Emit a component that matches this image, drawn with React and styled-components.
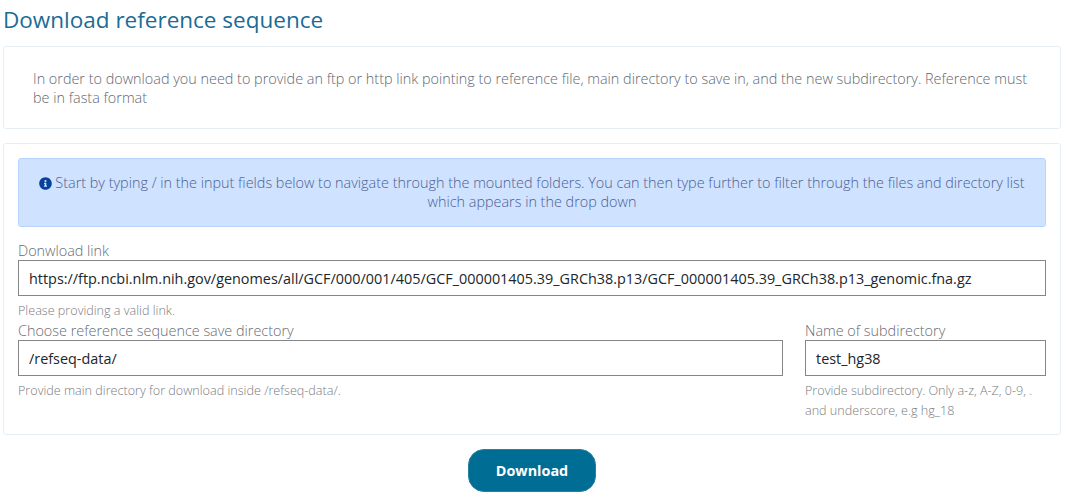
import React from "react";
import styled, { createGlobalStyle } from "styled-components";

const Global = createGlobalStyle`
  html, body { margin: 0; padding: 0; background: #fff; }
  body { font-family: "Open Sans", "Liberation Sans", sans-serif; }
  * { box-sizing: border-box; }
`;
const Page = styled.div`
  width: 1071px;
  height: 497px;
  padding: 4px 10px 0 3px;
  overflow: hidden;
`;
const Title = styled.h1`
  margin: 0 0 11px 0;
  font-size: 22.5px;
  line-height: 31px;
  font-weight: 400;
  color: #1a6c95;
`;
const Card = styled.section`
  background: #fff;
  border: 1px solid #e6eff5;
  border-radius: 3px;
`;
const IntroCard = styled(Card)`
  height: 83px;
  padding: 22px 29px 0;
  margin-bottom: 14px;
  font-size: 14.4px;
  line-height: 19px;
  font-weight: 300;
  color: #5f6871;
`;
const FormCard = styled(Card)`
  height: 292px;
  padding: 14px 14px 0;
`;
const Alert = styled.div`
  height: 69px;
  padding: 14px 20px 0;
  background: #cfe2ff;
  border: 1px solid #b6d4fe;
  border-radius: 3px;
  text-align: center;
  font-size: 14.4px;
  line-height: 19px;
  font-weight: 300;
  color: #4c5f92;
  margin-bottom: 15px;
`;
const InfoIcon = styled.svg`
  width: 13px;
  height: 13px;
  margin-right: 3px;
  vertical-align: -1.5px;
  fill: #084298;
`;
const Label = styled.label`
  display: block;
  font-size: 14.4px;
  line-height: 18px;
  font-weight: 300;
  color: #666c74;
`;
const Input = styled.input`
  display: block;
  width: 100%;
  height: 36px;
  padding: 0 10px;
  border: 1px solid #868686;
  border-radius: 0;
  outline: none;
  background: #fff;
  font: 400 14.4px "Open Sans", sans-serif;
  color: #212529;
`;
const Hint = styled.div`
  margin-top: 5px;
  font-size: 12.6px;
  line-height: 20px;
  font-weight: 300;
  color: #777c83;
`;
const LinkHint = styled(Hint)`
  margin-bottom: 1px;
`;
const Row = styled.div`
  display: grid;
  grid-template-columns: 765px 241px;
  column-gap: 22px;
`;
const Footer = styled.div`
  display: flex;
  justify-content: center;
  margin-top: 14px;
`;
const Button = styled.button`
  width: 128px;
  height: 43px;
  border: 1px solid #2a7f9f;
  border-radius: 16px;
  background: #006d95;
  color: #fff;
  font: 700 14.4px "Open Sans", sans-serif;
`;

export default function App() {
  return (
    <Page>
      <Global />
      <Title>Download reference sequence</Title>
      <IntroCard>
        In order to download you need to provide an ftp or http link pointing to reference file, main directory to save in, and the new subdirectory. Reference must be in fasta format
      </IntroCard>
      <FormCard>
        <Alert>
          <InfoIcon viewBox="0 0 512 512" aria-hidden="true">
            <path d="M256 8C119 8 8 119 8 256s111 248 248 248 248-111 248-248S393 8 256 8zm0 110a42 42 0 1 1 0 84 42 42 0 0 1 0-84zm56 254c0 7-5 12-12 12h-88c-7 0-12-5-12-12v-24c0-7 5-12 12-12h12v-64h-12c-7 0-12-5-12-12v-24c0-7 5-12 12-12h64c7 0 12 5 12 12v100h12c7 0 12 5 12 12z" />
          </InfoIcon>
          Start by typing / in the input fields below to navigate through the mounted folders. You can then type further to filter through the files and directory list which appears in the drop down
        </Alert>
        <Label>Donwload link</Label>
        <Input readOnly value="https://ftp.ncbi.nlm.nih.gov/genomes/all/GCF/000/001/405/GCF_000001405.39_GRCh38.p13/GCF_000001405.39_GRCh38.p13_genomic.fna.gz" />
        <LinkHint>Please providing a valid link.</LinkHint>
        <Row>
          <div>
            <Label>Choose reference sequence save directory</Label>
            <Input readOnly value="/refseq-data/" />
            <Hint>Provide main directory for download inside /refseq-data/.</Hint>
          </div>
          <div>
            <Label>Name of subdirectory</Label>
            <Input readOnly value="test_hg38" />
            <Hint>Provide subdirectory. Only a-z, A-Z, 0-9, . and underscore, e.g hg_18</Hint>
          </div>
        </Row>
      </FormCard>
      <Footer>
        <Button>Download</Button>
      </Footer>
    </Page>
  );
}
